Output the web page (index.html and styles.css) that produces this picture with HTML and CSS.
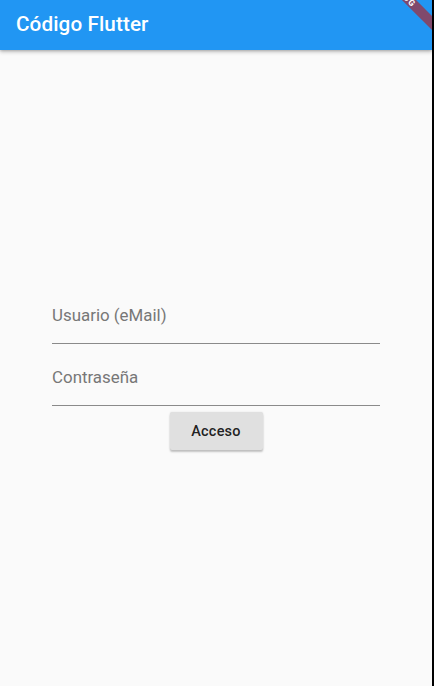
FILE: index.html
```html
<!DOCTYPE html>
<html lang="es">
<head>
<meta charset="utf-8">
<title>Código Flutter</title>
<link rel="stylesheet" href="styles.css">
</head>
<body>
<div class="frame">
  <div class="screen">
    <header class="appbar">
      <h1 class="appbar-title">Código Flutter</h1>
    </header>
    <main class="content">
      <form class="login">
        <label class="field">
          <span class="field-label">Usuario (eMail)</span>
        </label>
        <label class="field">
          <span class="field-label">Contraseña</span>
        </label>
        <div class="actions">
          <button type="button" class="raised">Acceso</button>
        </div>
      </form>
    </main>
    <div class="debug-banner"><span>DEBUG</span></div>
  </div>
  <div class="edge"></div>
</div>
</body>
</html>
```

FILE: styles.css
```css
html, body {
  margin: 0;
  padding: 0;
  background: #000;
}
body {
  font-family: Roboto, "Noto Sans", "Liberation Sans", sans-serif;
}
.frame {
  display: flex;
  width: 434px;
  height: 686px;
}
.screen {
  position: relative;
  width: 432px;
  height: 686px;
  background: #fafafa;
  display: flex;
  flex-direction: column;
  overflow: hidden;
}
.edge {
  width: 2px;
  background: #000;
}
.appbar {
  height: 50px;
  background: #2196f3;
  display: flex;
  align-items: center;
  padding: 0 16px;
  box-shadow: 0 2px 4px rgba(0,0,0,0.22), 0 1px 2px rgba(0,0,0,0.14);
  position: relative;
  z-index: 1;
  flex-shrink: 0;
}
.appbar-title {
  margin: 0;
  color: #fff;
  font-size: 20.7px;
  font-weight: 500;
  line-height: 24px;
  letter-spacing: 0.1px;
  padding-bottom: 2px;
}
.content {
  flex: 1;
  display: flex;
  align-items: center;
  justify-content: center;
}
.login {
  width: 328px;
  margin-top: 2px;
  display: flex;
  flex-direction: column;
}
.field {
  display: flex;
  flex-direction: column;
  height: 62px;
  padding-top: 23px;
  box-sizing: border-box;
  border-bottom: 1px solid #8a8a8a;
}
.field-label {
  font-size: 16.9px;
  line-height: 20px;
  color: #777;
}
.actions {
  display: flex;
  justify-content: center;
  padding: 6px 0;
}
.raised {
  width: 93px;
  height: 38px;
  border: none;
  border-radius: 2px;
  background: #e0e0e0;
  color: rgba(0,0,0,0.87);
  font-family: Roboto, "Noto Sans", "Liberation Sans", sans-serif;
  font-size: 14.5px;
  font-weight: 500;
  letter-spacing: 0.2px;
  box-shadow: 0 2px 2px rgba(0,0,0,0.22), 0 0 2px rgba(0,0,0,0.10);
  padding: 0;
}
.debug-banner {
  position: absolute;
  left: 343px;
  top: -11.5px;
  width: 120px;
  height: 10px;
  background: rgba(183,28,28,0.63);
  transform: rotate(45deg);
  display: flex;
  align-items: center;
  justify-content: center;
  z-index: 2;
}
.debug-banner span {
  color: #fff;
  font-size: 8.5px;
  font-weight: 700;
  line-height: 10px;
  letter-spacing: 1px;
}
```
